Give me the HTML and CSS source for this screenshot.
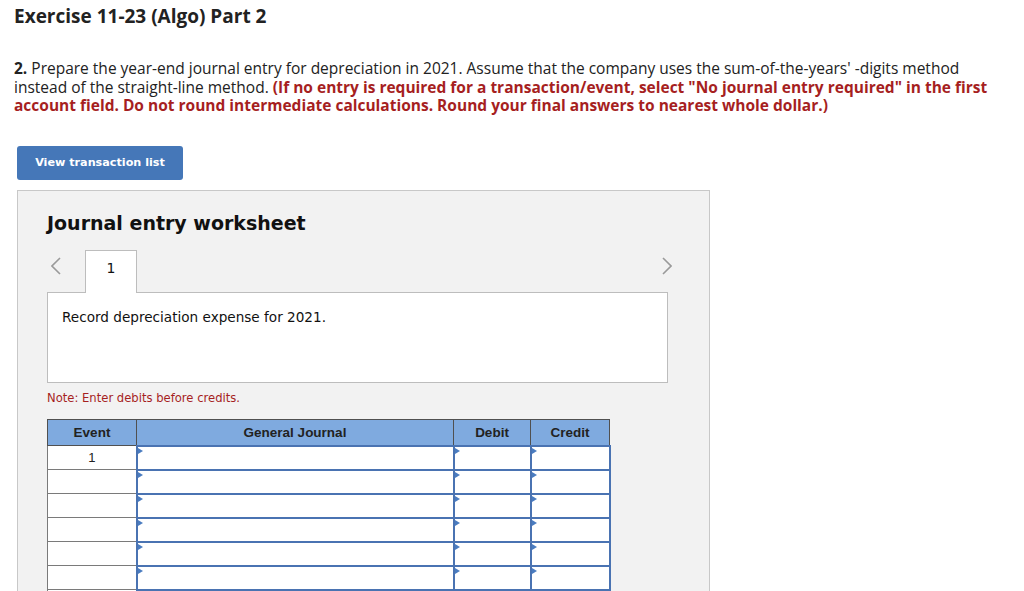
FILE: index.html
```html
<!DOCTYPE html>
<html>
<head>
<meta charset="utf-8">
<link rel="stylesheet" href="styles.css">
</head>
<body>
<div class="page">
  <h1 class="title">Exercise 11-23 (Algo) Part 2</h1>
  <p class="question"><b>2.</b> Prepare the year-end journal entry for depreciation in 2021. Assume that the company uses the sum-of-the-years' -digits method instead of the straight-line method. <span class="warn">(If no entry is required for a transaction/event, select "No journal entry required" in the first account field. Do not round intermediate calculations. Round your final answers to nearest whole dollar.)</span></p>
  <button class="btn">View transaction list</button>
  <div class="panel">
    <h2 class="ws-title">Journal entry worksheet</h2>
    <div class="tabrow">
      <span class="chev"><svg width="10" height="18" viewBox="0 0 10 18"><polyline points="9,1 1,9 9,17" fill="none" stroke="#9a9a9a" stroke-width="1.6"/></svg></span>
      <div class="tab">1</div>
      <span class="spacer"></span>
      <span class="chev chev-r"><svg width="10" height="18" viewBox="0 0 10 18"><polyline points="1,1 9,9 1,17" fill="none" stroke="#9a9a9a" stroke-width="1.6"/></svg></span>
    </div>
    <div class="entrybox">Record depreciation expense for 2021.</div>
    <p class="note">Note: Enter debits before credits.</p>
    <table class="jt">
      <thead>
        <tr><th class="c-ev">Event</th><th class="c-gj">General Journal</th><th class="c-dr">Debit</th><th class="c-cr">Credit</th></tr>
      </thead>
      <tbody>
        <tr><td class="ev">1</td><td class="in"></td><td class="in"></td><td class="in"></td></tr>
        <tr><td class="ev"></td><td class="in"></td><td class="in"></td><td class="in"></td></tr>
        <tr><td class="ev"></td><td class="in"></td><td class="in"></td><td class="in"></td></tr>
        <tr><td class="ev"></td><td class="in"></td><td class="in"></td><td class="in"></td></tr>
        <tr><td class="ev"></td><td class="in"></td><td class="in"></td><td class="in"></td></tr>
        <tr><td class="ev"></td><td class="in"></td><td class="in"></td><td class="in"></td></tr>
        <tr><td class="ev"></td><td class="in"></td><td class="in"></td><td class="in"></td></tr>
      </tbody>
    </table>
  </div>
</div>
</body>
</html>
```

FILE: styles.css
```css
html, body {
  margin: 0;
  padding: 0;
  background: #fff;
}
.page {
  padding: 0 14px;
  font-family: "Open Sans", Lato, sans-serif;
  color: #222;
}
.title {
  font-size: 19px;
  font-weight: 700;
  line-height: 22px;
  margin: 5px 0 0 0;
}
.question {
  font-size: 15.5px;
  line-height: 18.5px;
  margin: 32px 0 0 0;
}
.question b {
  font-weight: 700;
}
.warn {
  color: #a61f1f;
  font-weight: 700;
}
.btn {
  display: block;
  margin: 31px 0 0 3px;
  width: 166px;
  height: 34px;
  border: none;
  border-radius: 3px;
  background: #4577b8;
  color: #fff;
  font-family: "DejaVu Sans", Verdana, sans-serif;
  font-weight: 700;
  font-size: 11.2px;
  padding: 0;
}
.panel {
  margin: 10px 0 0 3px;
  width: 662px;
  height: 420px;
  background: #f2f2f2;
  border: 1px solid #c8c8c8;
  padding: 0 0 0 29px;
  font-family: "DejaVu Sans", Verdana, sans-serif;
}
.ws-title {
  font-size: 19px;
  font-weight: 700;
  color: #111;
  margin: 20px 0 0 0;
  line-height: 24px;
}
.tabrow {
  display: flex;
  align-items: stretch;
  width: 633px;
  margin-top: 15px;
  height: 43px;
  position: relative;
  z-index: 2;
}
.chev {
  width: 38px;
  display: flex;
  align-items: flex-start;
  padding: 7px 0 0 4px;
  box-sizing: border-box;
}
.chev-r {
  width: 18px;
  padding-left: 0;
}
.spacer {
  flex: 1;
}
.tab {
  width: 50px;
  background: #fff;
  border: 1px solid #bdbdbd;
  border-bottom: none;
  text-align: center;
  font-size: 14px;
  line-height: 34px;
  color: #111;
}
.entrybox {
  width: 605px;
  height: 73px;
  margin-top: -1px;
  background: #fff;
  border: 1px solid #bdbdbd;
  padding: 16px 0 0 14px;
  font-size: 13.6px;
  line-height: 16px;
  color: #111;
  position: relative;
  z-index: 1;
}
.note {
  margin: 8px 0 0 0;
  font-size: 11.6px;
  line-height: 14px;
  color: #a61f1f;
}
.jt {
  margin-top: 14px;
  border-collapse: collapse;
  table-layout: fixed;
  font-family: "Liberation Sans", Arial, sans-serif;
}
.jt th {
  background: #7faadf;
  border: 1px solid #505050;
  height: 25px;
  font-size: 13.5px;
  font-weight: 700;
  color: #222;
  padding: 0;
}
.c-ev { width: 88px; }
.c-gj { width: 316px; }
.c-dr { width: 76px; }
.c-cr { width: 78px; }
.jt td {
  height: 22px;
  padding: 0;
  background: #fff;
}
.jt td.ev {
  border: 1px solid #7a7a7a;
  text-align: center;
  font-size: 13px;
  color: #222;
}
.jt td.in {
  border: 2px solid #4a73b2;
  position: relative;
}
.jt td.in::before {
  content: "";
  position: absolute;
  left: 0;
  top: 1px;
  border-left: 5px solid #4a7cc0;
  border-top: 3px solid transparent;
  border-bottom: 3px solid transparent;
}
```
